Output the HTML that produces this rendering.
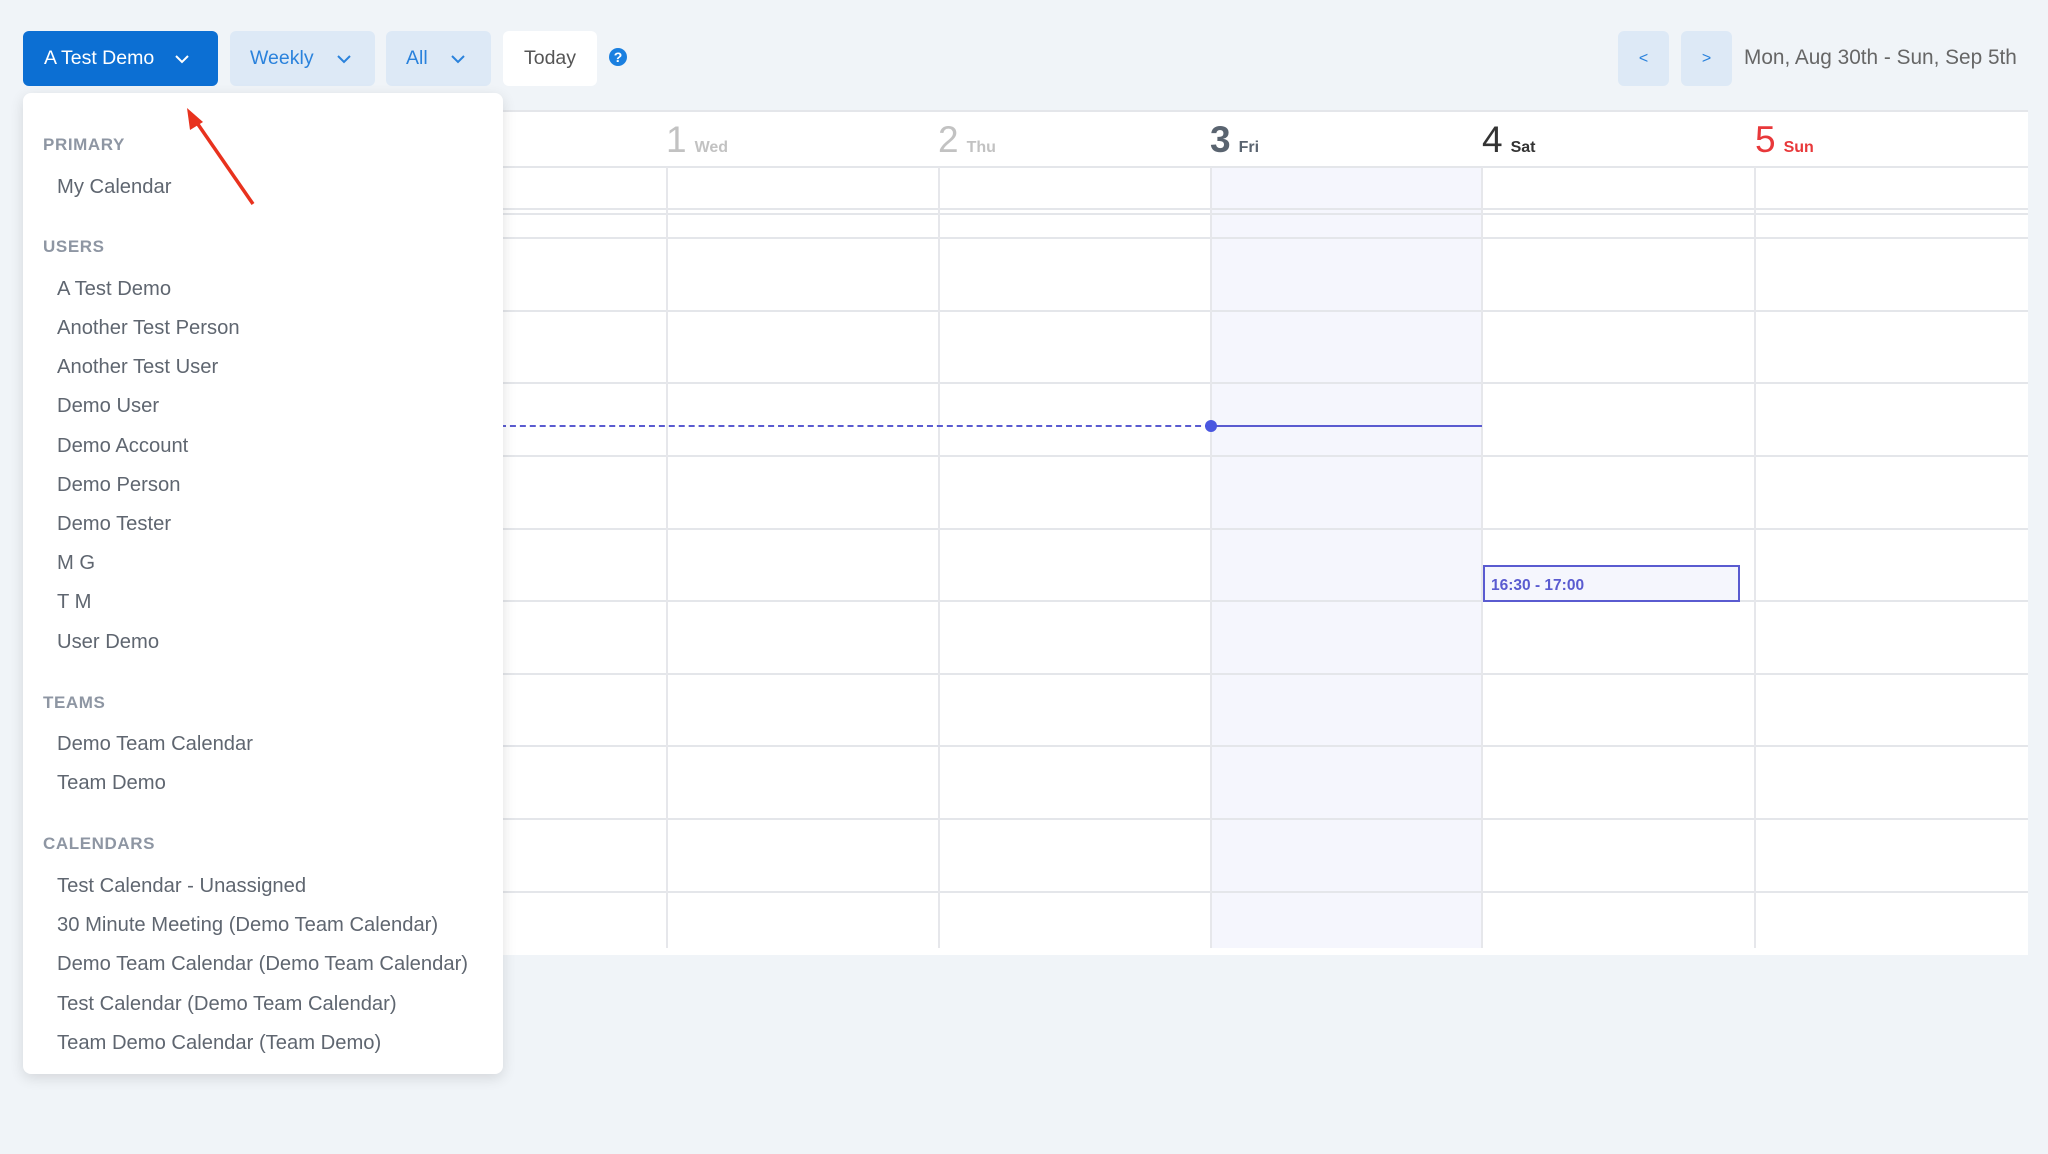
<!DOCTYPE html>
<html><head><meta charset="utf-8"><style>
*{margin:0;padding:0;box-sizing:border-box}
body{width:2048px;height:1154px;background:#f0f4f8;font-family:"Liberation Sans",sans-serif;position:relative;overflow:hidden}
.a{position:absolute}
.btn{position:absolute;top:31px;height:55px;border-radius:6px;font-size:19.5px;display:flex;align-items:center}
.hl{position:absolute;left:23px;right:20px;height:2px;background:#e4e6ea}
.vl{position:absolute;width:2px;background:#e6e7eb;top:167px;bottom:206px}
.dn{position:absolute;top:119px;font-size:37px;color:#c2c2c2}
.dn b{font-size:16px;font-weight:bold;margin-left:8px}
.dd{position:absolute;left:23px;top:93px;width:480px;height:981px;background:#fff;border-radius:8px;box-shadow:0 4px 14px rgba(0,0,0,.12)}
.h{position:absolute;left:20px;font-size:17px;font-weight:bold;color:#8e96a3;letter-spacing:.6px}
.i{position:absolute;left:34px;font-size:20.2px;color:#5f6670}
</style></head><body>
<div class="btn" style="left:23px;width:195px;background:#0c6fd3;color:#fff;padding-left:21px">A Test Demo<svg style="margin-left:20px" width="16" height="10" viewBox="0 0 16 10"><path d="M2 2l6 6 6-6" fill="none" stroke="#fff" stroke-width="2"/></svg></div>
<div class="btn" style="left:230px;width:145px;background:#dde9f6;color:#2a82dc;padding-left:20px">Weekly<svg style="margin-left:22px" width="16" height="10" viewBox="0 0 16 10"><path d="M2 2l6 6 6-6" fill="none" stroke="#2a82dc" stroke-width="2"/></svg></div>
<div class="btn" style="left:386px;width:105px;background:#dde9f6;color:#2a82dc;padding-left:20px">All<svg style="margin-left:22px" width="16" height="10" viewBox="0 0 16 10"><path d="M2 2l6 6 6-6" fill="none" stroke="#2a82dc" stroke-width="2"/></svg></div>
<div class="btn" style="left:503px;width:94px;background:#fff;color:#555;justify-content:center">Today</div>
<svg class="a" style="left:609px;top:48px" width="18" height="18" viewBox="0 0 18 18"><circle cx="9" cy="9" r="9" fill="#1a7fe0"/><text x="9" y="14" font-size="14" font-weight="bold" fill="#fff" text-anchor="middle" font-family="Liberation Sans">?</text></svg>
<div class="btn" style="left:1618px;width:51px;background:#dde9f6;color:#2a82dc;justify-content:center;font-size:16px">&lt;</div>
<div class="btn" style="left:1681px;width:51px;background:#dde9f6;color:#2a82dc;justify-content:center;font-size:16px">&gt;</div>
<div class="a" style="left:1744px;top:46px;font-size:20.8px;color:#666">Mon, Aug 30th - Sun, Sep 5th</div>

<div class="a" style="left:23px;top:110px;width:2005px;height:845px;background:#fff;border-top:2px solid #e4e6ea"></div>
<div class="a" style="left:1211px;top:167px;width:271px;height:781px;background:#f5f6fd"></div>
<div class="hl" style="top:166px"></div>
<div class="hl" style="top:208px"></div>
<div class="hl" style="top:213px"></div>
<div class="hl" style="top:237px"></div>
<div class="hl" style="top:310px"></div>
<div class="hl" style="top:382px"></div>
<div class="hl" style="top:455px"></div>
<div class="hl" style="top:528px"></div>
<div class="hl" style="top:600px"></div>
<div class="hl" style="top:673px"></div>
<div class="hl" style="top:745px"></div>
<div class="hl" style="top:818px"></div>
<div class="hl" style="top:891px"></div>
<div class="vl" style="left:666px"></div>
<div class="vl" style="left:938px"></div>
<div class="vl" style="left:1210px"></div>
<div class="vl" style="left:1481px"></div>
<div class="vl" style="left:1754px"></div>
<div class="dn" style="left:666px">1<b>Wed</b></div>
<div class="dn" style="left:938px">2<b>Thu</b></div>
<div class="dn" style="left:1210px;color:#5a6470;font-weight:bold">3<b style="color:#5a6470">Fri</b></div>
<div class="dn" style="left:1482px;color:#333">4<b>Sat</b></div>
<div class="dn" style="left:1755px;color:#e8383a">5<b>Sun</b></div>
<div class="a" style="left:500px;top:425px;width:711px;border-top:2px dashed #5a5bd0"></div>
<div class="a" style="left:1211px;top:425px;width:271px;height:2px;background:#5a5bd0"></div>
<div class="a" style="left:1205px;top:420px;width:12px;height:12px;border-radius:50%;background:#4a57e0"></div>
<div class="a" style="left:1483px;top:565px;width:257px;height:37px;border:2px solid #5a5bd0;background:#f5f6fd;color:#5a5bd0;font-size:15.5px;font-weight:bold;padding:10px 0 0 6px">16:30 - 17:00</div>

<div class="dd">
<div class="h" style="top:42px">PRIMARY</div>
<div class="i" style="top:83px">My Calendar</div>
<div class="h" style="top:144px">USERS</div>
<div class="i" style="top:185px">A Test Demo</div>
<div class="i" style="top:224px">Another Test Person</div>
<div class="i" style="top:263px">Another Test User</div>
<div class="i" style="top:302px">Demo User</div>
<div class="i" style="top:342px">Demo Account</div>
<div class="i" style="top:381px">Demo Person</div>
<div class="i" style="top:420px">Demo Tester</div>
<div class="i" style="top:459px">M G</div>
<div class="i" style="top:498px">T M</div>
<div class="i" style="top:538px">User Demo</div>
<div class="h" style="top:600px">TEAMS</div>
<div class="i" style="top:640px">Demo Team Calendar</div>
<div class="i" style="top:679px">Team Demo</div>
<div class="h" style="top:741px">CALENDARS</div>
<div class="i" style="top:782px">Test Calendar - Unassigned</div>
<div class="i" style="top:821px">30 Minute Meeting (Demo Team Calendar)</div>
<div class="i" style="top:860px">Demo Team Calendar (Demo Team Calendar)</div>
<div class="i" style="top:900px">Test Calendar (Demo Team Calendar)</div>
<div class="i" style="top:939px">Team Demo Calendar (Team Demo)</div>
</div>
<svg class="a" style="left:0;top:0" width="300" height="220"><line x1="253" y1="204" x2="195" y2="120" stroke="#e8321e" stroke-width="3.5"/><path d="M187 108 L203 122 L190 130 Z" fill="#e8321e"/></svg>
</body></html>
